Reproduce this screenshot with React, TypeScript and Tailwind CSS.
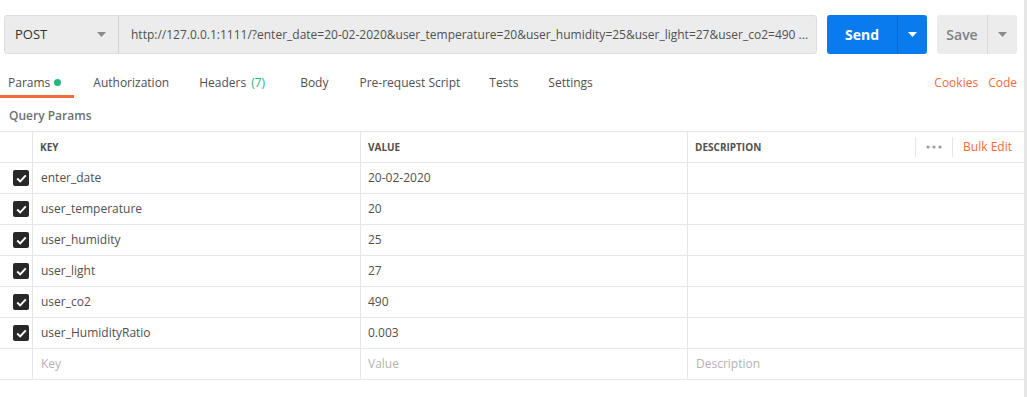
import React from 'react';

const rows = [
  { key: 'enter_date', value: '20-02-2020' },
  { key: 'user_temperature', value: '20' },
  { key: 'user_humidity', value: '25' },
  { key: 'user_light', value: '27' },
  { key: 'user_co2', value: '490' },
  { key: 'user_HumidityRatio', value: '0.003' },
];

const Caret = ({ className }: { className?: string }) => (
  <svg width="9" height="5" viewBox="0 0 9 5" className={className}>
    <path d="M0 0 L9 0 L4.5 5 Z" fill="currentColor" />
  </svg>
);

const Check = () => (
  <div className="w-[16px] h-[16px] rounded-[2px] bg-[#282828] flex items-center justify-center">
    <svg width="11" height="9" viewBox="0 0 11 9">
      <path d="M1.2 4.6 L4.2 7.4 L9.8 1.4" stroke="#fff" strokeWidth="2" fill="none" />
    </svg>
  </div>
);

const Dots = () => (
  <svg width="16" height="4" viewBox="0 0 16 4">
    <circle cx="2" cy="2" r="1.6" fill="#9a9a9a" />
    <circle cx="8" cy="2" r="1.6" fill="#9a9a9a" />
    <circle cx="14" cy="2" r="1.6" fill="#9a9a9a" />
  </svg>
);

export default function App() {
  return (
    <div
      className="w-[1027px] h-[397px] bg-white text-[12px] text-[#505050] border-r-[3px] border-[#e6e6e6] overflow-hidden"
      style={{ fontFamily: '"Open Sans", "Noto Sans", sans-serif' }}
    >
      {/* url bar */}
      <div className="flex items-center pt-[15px] pl-[4px] h-[54px]">
        <div className="flex shrink-0 h-[39px] w-[813px] rounded-[3px] border border-[#dedede] bg-[#ececec]">
          <div className="w-[114px] flex items-center justify-between pl-[10px] pr-[12px] border-r border-[#d4d4d4] text-[13px] text-[#333]">
            <span>POST</span>
            <Caret className="text-[#8a8a8a]" />
          </div>
          <div className="flex-1 flex items-center pl-[12px] text-[12px] text-[#505050] whitespace-nowrap overflow-hidden">
            http://127.0.0.1:1111/?enter_date=20-02-2020&amp;user_temperature=20&amp;user_humidity=25&amp;user_light=27&amp;user_co2=490 ...
          </div>
        </div>
        <div className="ml-[10px] shrink-0 flex h-[39px] w-[100px] rounded-[3px] bg-[#097bed] text-white">
          <div className="w-[70px] flex items-center justify-center font-bold text-[14px]">Send</div>
          <div className="flex-1 flex items-center justify-center border-l border-[#0a6cd0]">
            <Caret className="text-white" />
          </div>
        </div>
        <div className="ml-[10px] shrink-0 flex h-[39px] w-[80px] rounded-[3px] bg-[#ececec] text-[#808080]">
          <div className="w-[50px] flex items-center justify-center font-semibold text-[14px]">Save</div>
          <div className="flex-1 flex items-center justify-center border-l border-[#d8d8d8]">
            <Caret className="text-[#8a8a8a]" />
          </div>
        </div>
      </div>

      {/* tabs */}
      <div className="flex items-end h-[44px]">
        <div className="flex items-end h-full">
          <div className="relative h-full flex items-center pl-[8px] pr-[13px] pt-[13px]">
            <span>Params</span>
            <span className="ml-[4px] inline-block w-[7px] h-[7px] rounded-full bg-[#26b47f]" />
            <div className="absolute left-0 right-0 bottom-0 h-[3px] bg-[#f26b3a]" />
          </div>
          <div className="h-full flex items-center pt-[13px] ml-[19px]">Authorization</div>
          <div className="h-full flex items-center pt-[13px] ml-[30px]">
            Headers <span className="ml-[5px] text-[#26b47f]">(7)</span>
          </div>
          <div className="h-full flex items-center pt-[13px] ml-[35px]">Body</div>
          <div className="h-full flex items-center pt-[13px] ml-[31px]">Pre-request Script</div>
          <div className="h-full flex items-center pt-[13px] ml-[29px]">Tests</div>
          <div className="h-full flex items-center pt-[13px] ml-[30px]">Settings</div>
        </div>
        <div className="ml-auto h-full flex items-center pt-[13px] pr-[7px] text-[#f26b3a] gap-[10px]">
          <span>Cookies</span>
          <span>Code</span>
        </div>
      </div>

      <div className="h-[33px] flex items-center pl-[9px] pt-[2px] font-semibold text-[#707070]">Query Params</div>

      {/* table */}
      <div className="border-t border-[#e6e6e6]">
        <div className="flex h-[31px] border-b border-[#e6e6e6] text-[10px] font-bold text-[#505050]">
          <div className="w-[33px] border-r border-[#e6e6e6]" />
          <div className="w-[328px] border-r border-[#e6e6e6] flex items-center pl-[7px]">KEY</div>
          <div className="w-[327px] border-r border-[#e6e6e6] flex items-center pl-[7px]">VALUE</div>
          <div className="flex-1 flex items-center pl-[7px]">
            <span>DESCRIPTION</span>
            <div className="ml-auto flex items-center h-[20px]">
              <div className="h-full border-l border-[#e6e6e6] pl-[10px] pr-[10px] flex items-center">
                <Dots />
              </div>
              <div className="h-full border-l border-[#e6e6e6] pl-[10px] pr-[12px] flex items-center text-[#f26b3a] text-[12px] font-normal">Bulk Edit</div>
            </div>
          </div>
        </div>
        {rows.map((r) => (
          <div key={r.key} className="flex h-[31px] border-b border-[#e6e6e6]">
            <div className="w-[33px] border-r border-[#e6e6e6] flex items-center pl-[13px]">
              <Check />
            </div>
            <div className="w-[328px] border-r border-[#e6e6e6] flex items-center pl-[8px]">{r.key}</div>
            <div className="w-[327px] border-r border-[#e6e6e6] flex items-center pl-[7px]">{r.value}</div>
            <div className="flex-1" />
          </div>
        ))}
        <div className="flex h-[31px] border-b border-[#e6e6e6] text-[#b3b3b3]">
          <div className="w-[33px] border-r border-[#e6e6e6]" />
          <div className="w-[328px] border-r border-[#e6e6e6] flex items-center pl-[8px]">Key</div>
          <div className="w-[327px] border-r border-[#e6e6e6] flex items-center pl-[7px]">Value</div>
          <div className="flex-1 flex items-center pl-[8px]">Description</div>
        </div>
      </div>
    </div>
  );
}
